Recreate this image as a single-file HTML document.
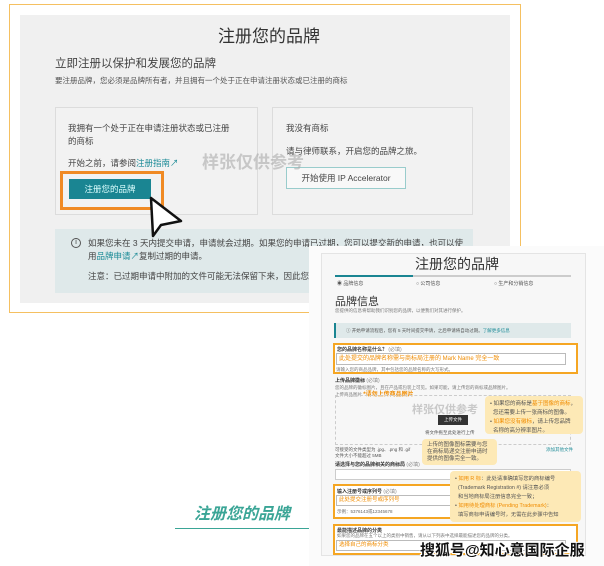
<!DOCTYPE html>
<html><head><meta charset="utf-8"><style>
*{margin:0;padding:0;box-sizing:border-box}
body{width:604px;height:566px;background:#fff;position:relative;overflow:hidden;font-family:"Liberation Sans","Noto Sans CJK SC",sans-serif;color:#333}
.a{position:absolute;white-space:nowrap}
.frame{position:absolute;left:9px;top:4px;width:512px;height:309px;border:1.5px solid #f5c061}
.gp{position:absolute;left:20px;top:15px;width:490px;height:288px;background:#f0f0f0}
.card{position:absolute;border:1px solid #dcdcdc;background:#f2f2f2}
.p2{position:absolute;left:309px;top:246px;width:295px;height:320px;background:#fbfbfb}
.in{position:absolute;left:321px;top:253px;width:265px;height:303px;background:#f7f7f7;border:1px solid #e4e4e4}
.ob{position:absolute;border:2px solid #f5a623;background:#fff}
.yn{position:absolute;background:#fde9b6;border-radius:4px;font-size:5.5px;line-height:9px;color:#555;padding:4px 5px;white-space:nowrap;overflow:hidden}
.or{color:#f08c00}
.t{color:#1a8a96}
</style></head><body>
<div class="frame"></div>
<div class="gp"></div>
<div class="a" style="left:218px;top:22px;font-size:17px;color:#333">注册您的品牌</div>
<div class="a" style="left:55px;top:55px;font-size:11.5px;color:#444">立即注册以保护和发展您的品牌</div>
<div class="a" style="left:55px;top:75px;font-size:7.5px;color:#555">要注册品牌，您必须是品牌所有者，并且拥有一个处于正在申请注册状态或已注册的商标</div>
<div class="card" style="left:55px;top:107px;width:203px;height:108px"></div>
<div class="card" style="left:272px;top:107px;width:201px;height:108px"></div>
<div class="a" style="left:68px;top:122px;font-size:8.5px;line-height:13px;color:#444">我拥有一个处于正在申请注册状态或已注册<br>的商标</div>
<div class="a" style="left:68px;top:157px;font-size:8.5px;color:#444">开始之前，请参阅<span class="t">注册指南↗</span></div>
<div class="a" style="left:60px;top:171px;width:104px;height:39px;border:3px solid #f08a24"></div>
<div class="a" style="left:69px;top:179px;width:82px;height:20px;background:#1a8592;color:#dff;font-size:8.5px;text-align:center;line-height:20px">注册您的品牌</div>
<div class="a" style="left:286px;top:122px;font-size:8.5px;color:#444">我没有商标</div>
<div class="a" style="left:286px;top:145px;font-size:8.5px;color:#444">请与律师联系，开启您的品牌之旅。</div>
<div class="a" style="left:286px;top:167px;width:120px;height:22px;border:1px solid #9cc;background:#f8f8f8;font-size:8.5px;text-align:center;line-height:20px;color:#444">开始使用 IP Accelerator</div>
<div class="a" style="left:202px;top:148px;font-size:17px;font-weight:bold;color:rgba(170,170,170,.6)">样张仅供参考</div>
<div class="a" style="left:55px;top:229px;width:418px;height:64px;background:#dfe9ea"></div>
<div class="a" style="left:71px;top:238px;width:10px;height:10px;border:1px solid #555;border-radius:50%;font-size:7px;line-height:8px;text-align:center">i</div>
<div class="a" style="left:88px;top:237px;font-size:8.5px;line-height:13px;color:#444">如果您未在 3 天内提交申请，申请就会过期。如果您的申请已过期，您可以提交新的申请，也可以使<br>用<span class="t">品牌申请↗</span>复制过期的申请。</div>
<div class="a" style="left:88px;top:270px;font-size:8.5px;color:#444">注意：已过期申请中附加的文件可能无法保留下来，因此您</div>
<svg class="a" style="left:145px;top:195px" width="42" height="45"><path d="M6 3 L8 41 L16 30 L36 26 Z" fill="#fff" stroke="#111" stroke-width="2.5" stroke-linejoin="round"/></svg>
<div class="a" style="left:194px;top:500px;font-size:16px;font-weight:bold;font-style:italic;color:#3aa596">注册您的品牌</div>
<div class="a" style="left:175px;top:528px;width:148px;height:1px;background:#3aa596"></div>
<div class="p2"></div>
<div class="in"></div>
<div class="a" style="left:415px;top:254px;font-size:14px;color:#333">注册您的品牌</div>
<div class="a" style="left:335px;top:275px;width:236px;height:2px;background:#ccc"></div>
<div class="a" style="left:335px;top:275px;width:78px;height:2px;background:#1a8592"></div>
<div class="a" style="left:337px;top:280px;font-size:5px;color:#555">◉ 品牌信息</div>
<div class="a" style="left:416px;top:280px;font-size:5px;color:#555">○ 公司信息</div>
<div class="a" style="left:494px;top:280px;font-size:5px;color:#555">○ 生产和分销信息</div>
<div class="a" style="left:335px;top:293px;font-size:11px;color:#333">品牌信息</div>
<div class="a" style="left:335px;top:308px;font-size:4.5px;color:#777">您提供的信息将帮助我们识别您的品牌，以便我们对其进行保护。</div>
<div class="a" style="left:334px;top:323px;width:237px;height:15px;background:#dfe9ea;border-left:2px solid #1a8592;font-size:4.5px;line-height:15px;padding-left:10px;color:#555">ⓘ 开始申请流程后，您有 5 天时间提交申请，之后申请将自动过期。<span class="t">了解更多信息</span></div>
<div class="ob" style="left:333px;top:343px;width:245px;height:31px"></div>
<div class="a" style="left:337px;top:346px;font-size:5px;font-weight:bold;color:#333">您的品牌名称是什么？ <span style="font-weight:normal;color:#888">(必填)</span></div>
<div class="a" style="left:336px;top:353px;width:230px;height:12px;border:1px solid #bbb;background:#fff;font-size:6px;line-height:10px;padding-left:2px" ><span class="or">此处提交的品牌名称需与商标局注册的 Mark Name 完全一致</span></div>
<div class="a" style="left:336px;top:367px;font-size:4.5px;color:#777">请输入您的商品品牌，其中包括您的品牌名称的大写形式。</div>
<div class="a" style="left:335px;top:377px;font-size:5px;font-weight:bold;color:#333">上传品牌徽标 <span style="font-weight:normal;color:#888">(必填)</span></div>
<div class="a" style="left:335px;top:384px;font-size:4.5px;color:#777;line-height:7px">您的品牌的徽标图片，且在产品或包装上可见。如果可能，请上传您的商标或品牌图片。<br>上传商品图片 <b class="or" style="font-size:6px">*请勿上传商品图片</b></div>
<div class="a" style="left:335px;top:395px;width:236px;height:50px;border:1px dashed #ccc"></div>
<div class="a" style="left:412px;top:401px;font-size:11px;font-weight:bold;color:rgba(170,170,170,.6)">样张仅供参考</div>
<div class="a" style="left:438px;top:415px;width:30px;height:10px;background:#333;color:#fff;font-size:4.5px;text-align:center;line-height:10px">上传文件</div>
<div class="a" style="left:425px;top:430px;font-size:4.5px;color:#555">将文件拖至此处进行上传</div>
<div class="a" style="left:335px;top:447px;font-size:4.5px;color:#555;line-height:6px">可接受的文件类型为 .jpg、.png 和 .gif<br>文件大小不能超过 5MB</div>
<div class="a" style="left:546px;top:447px;font-size:4.5px"><span class="t">添加其他文件</span></div>
<div class="a" style="left:335px;top:461px;font-size:5px;font-weight:bold;color:#333">请选择与您的品牌相关的商标局 <span style="font-weight:normal;color:#888">(必填)</span></div>
<div class="a" style="left:335px;top:469px;width:236px;height:11px;border:1px solid #ccc;background:#fff"></div>
<div class="ob" style="left:333px;top:484px;width:125px;height:35px"></div>
<div class="a" style="left:337px;top:488px;font-size:5px;font-weight:bold;color:#333">输入注册号或序列号 <span style="font-weight:normal;color:#888">(必填)</span></div>
<div class="a" style="left:336px;top:495px;width:118px;height:11px;border:1px solid #bbb;background:#fff;font-size:5.5px;line-height:9px;padding-left:2px"><span class="or">此处提交注册号或序列号</span></div>
<div class="a" style="left:337px;top:509px;font-size:4.5px;color:#666">示例：5376143或12345678</div>
<div class="ob" style="left:333px;top:524px;width:245px;height:31px"></div>
<div class="a" style="left:337px;top:527px;font-size:5px;font-weight:bold;color:#333">最能描述品牌的分类</div>
<div class="a" style="left:337px;top:533px;font-size:4.5px;color:#777">如果您的品牌在五个以上的类别中销售，请从以下列表中选择最能描述您的品牌的分类。</div>
<div class="a" style="left:336px;top:540px;width:230px;height:11px;border:1px solid #bbb;background:#fff;font-size:5.5px;line-height:9px;padding-left:2px"><span class="or">选择自己的商标分类</span></div>
<div class="yn" style="left:485px;top:396px;width:98px;height:38px">• 如果您的商标是<span class="or">基于图像的商标</span>，<br>&nbsp; 您还需要上传一张商标的图像。<br>• <span class="or">如果您没有徽标</span>，请上传您品牌<br>&nbsp; 名称的高分辨率图片。</div>
<div class="yn" style="left:422px;top:439px;width:75px;height:26px;padding:3px 5px;line-height:7px;font-size:5.5px">上传的图像图标需要与您<br>在商标局递交注册申请时<br>提供的图像完全一致。</div>
<div class="yn" style="left:450px;top:471px;width:131px;height:51px;line-height:9px;font-size:5.3px">• <span class="or">如用 R 标</span>：此处请准确填写您的商标编号<br>&nbsp; (Trademark Registration #) 请注意必须<br>&nbsp; 和当地商标局注册信息完全一致；<br>• <span class="or">如用待处理商标 (Pending Trademark)</span>：<br>&nbsp; 填写商标申请编号时，无需在此步骤中告知</div>
<div class="a" style="left:420px;top:539px;font-size:15px;font-weight:bold;color:#111;text-shadow:-1px -1px 0 #fff,1px -1px 0 #fff,-1px 1px 0 #fff,1px 1px 0 #fff">搜狐号@知心意国际企服</div>
</body></html>
